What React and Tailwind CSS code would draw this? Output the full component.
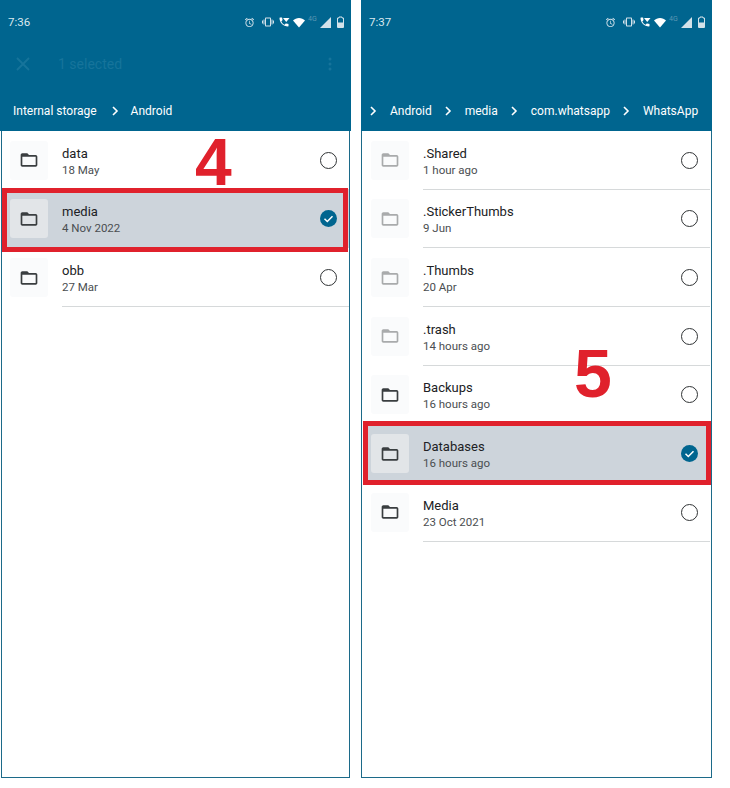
import { Fragment } from 'react'

const FOLDER = 'M20 6h-8l-2-2H4c-1.1 0-2 .9-2 2v12c0 1.1.9 2 2 2h16c1.1 0 2-.9 2-2V8c0-1.1-.9-2-2-2zm0 12H4V8h16v10z'

const leftRows = [
  { name: 'data', date: '18 May' },
  { name: 'media', date: '4 Nov 2022', selected: true, frame: '-top-[2px] -bottom-[3.5px] left-0 right-[1px]' },
  { name: 'obb', date: '27 Mar' },
]

const rightRows = [
  { name: '.Shared', date: '1 hour ago', faded: true },
  { name: '.StickerThumbs', date: '9 Jun', faded: true },
  { name: '.Thumbs', date: '20 Apr', faded: true },
  { name: '.trash', date: '14 hours ago', faded: true },
  { name: 'Backups', date: '16 hours ago' },
  { name: 'Databases', date: '16 hours ago', selected: true, frame: '-top-[3px] -bottom-[2px] left-0 -right-[1px]' },
  { name: 'Media', date: '23 Oct 2021' },
]

function Chevron() {
  return (
    <svg width="7" height="10" viewBox="0 0 7 10" className="shrink-0">
      <path d="M1 1l4 4-4 4" fill="none" stroke="white" strokeWidth="1.6" />
    </svg>
  )
}

function StatusIcons() {
  return (
    <div className="flex items-center text-[#d3e2ea]">
      <svg width="11" height="11" viewBox="0 0 24 24" fill="currentColor">
        <path d="M22 5.72l-4.6-3.86-1.29 1.53 4.6 3.86L22 5.72zM7.88 3.39L6.6 1.86 2 5.71l1.29 1.53 4.59-3.85zM12.5 8H11v6l4.75 2.85.75-1.23-4-2.37V8zM12 4c-4.97 0-9 4.03-9 9s4.02 9 9 9c4.97 0 9-4.03 9-9s-4.03-9-9-9zm0 16c-3.87 0-7-3.13-7-7s3.13-7 7-7 7 3.13 7 7-3.13 7-7 7z" />
      </svg>
      <svg width="12" height="12" viewBox="0 0 24 24" fill="currentColor" className="ml-[7px]">
        <path d="M0 15h2V9H0v6zm3 2h2V7H3v10zm19-8v6h2V9h-2zm-3 8h2V7h-2v10zM16.5 3h-9C6.67 3 6 3.67 6 4.5v15c0 .83.67 1.5 1.5 1.5h9c.83 0 1.5-.67 1.5-1.5v-15c0-.83-.67-1.5-1.5-1.5zM16 19H8V5h8v14z" />
      </svg>
      <svg width="12" height="12" viewBox="0 0 24 24" fill="white" className="ml-[4px]">
        <path d="M6.62 10.79c1.44 2.83 3.76 5.14 6.59 6.59l2.2-2.2c.27-.27.67-.36 1.02-.24 1.12.37 2.33.57 3.57.57.55 0 1 .45 1 1V20c0 .55-.45 1-1 1-9.39 0-17-7.61-17-17 0-.55.45-1 1-1h3.5c.55 0 1 .45 1 1 0 1.25.2 2.45.57 3.57.11.35.03.74-.25 1.02l-2.2 2.2z" />
        <path d="M10 4h13l-6.5 8z" />
      </svg>
      <svg width="12" height="11" viewBox="0 0 24 22" fill="white" className="ml-[3px]">
        <path d="M12 21L0 7c3.2-3 7.4-5 12-5s8.800 2 12 5z" />
      </svg>
      <span className="ml-[3px] -mt-[5px] w-[10px] text-[7px] leading-none text-[#5c97b3]">4G</span>
      <svg width="11" height="11" viewBox="0 0 22 22" fill="currentColor" className="ml-[2px] mt-[1px]">
        <path d="M0 22h22V0z" />
      </svg>
      <svg width="7" height="12" viewBox="0 0 14 24" className="ml-[6px]">
        <path d="M4 2h6v2h3v19H1V4h3z" fill="none" stroke="#d3e2ea" strokeWidth="2" />
        <path d="M2 13h10v9H2z" fill="#d3e2ea" />
      </svg>
    </div>
  )
}

function Header({ time, crumbs, children }) {
  return (
    <header className="h-[131px] shrink-0 flex flex-col bg-[#00658f] overflow-hidden">
      <div className="h-[44px] flex items-center justify-between pl-[8px] pr-[7px] text-[11.5px] text-[#dbe8ee]">
        <span className="pt-[2px]">{time}</span>
        <StatusIcons />
      </div>
      <div className="h-[40px] flex items-center">{children}</div>
      <div className="h-[47px] pt-[7px] flex items-center whitespace-nowrap text-[12px] text-white">{crumbs}</div>
    </header>
  )
}

function Row({ row }) {
  const folderColor = row.faded ? 'text-[#a9abac]' : 'text-[#3a3e40]'
  return (
    <div className={`relative h-[58.67px] flex items-center ${row.selected ? 'bg-[#cdd4db]' : ''}`}>
      <div className={`ml-[8px] w-[38px] h-[39px] shrink-0 rounded-[3px] flex items-center justify-center ${row.selected ? 'bg-[#e2e5e8]' : 'bg-[#fafbfc]'}`}>
        <svg width="20" height="20" viewBox="0 0 24 24" fill="currentColor" className={folderColor}>
          <path d={FOLDER} />
        </svg>
      </div>
      <div className="ml-[14px] pt-[2px] flex-1 min-w-0 self-stretch flex flex-col justify-center">
        <div className="text-[13px] leading-[17px] text-[#202124]">{row.name}</div>
        <div className="text-[11.5px] leading-[16px] text-[#4a4e51]">{row.date}</div>
      </div>
      <div className="mr-[12px] shrink-0">
        {row.selected ? (
          <svg width="17" height="17" viewBox="0 0 17 17">
            <circle cx="8.500" cy="8.500" r="8.500" fill="#00658f" />
            <path d="M4.500 8.800l2.800 2.700 5.200-5.300" fill="none" stroke="white" strokeWidth="1.500" />
          </svg>
        ) : (
          <div className="w-[17px] h-[17px] rounded-full border-[1.5px] border-[#303335]" />
        )}
      </div>
      {!row.selected && <div className="absolute left-[60px] right-0 bottom-0 h-px bg-[#d6d9da]" />}
      {row.selected && <div className={`absolute ${row.frame} border-[5px] border-[#e0212c]`} />}
    </div>
  )
}

function Phone({ time, crumbs, rows, bar, body, number, numberClass }) {
  return (
    <section className="relative w-[351px] h-[778px] flex flex-col font-['Roboto',sans-serif]">
      <Header time={time} crumbs={crumbs}>{bar}</Header>
      <div className={`flex-1 border-x border-b border-[#1c6a89] bg-white ${body}`}>
        {rows.map((row) => (
          <Row key={row.name} row={row} />
        ))}
      </div>
      <span className={`absolute ${numberClass} font-['Liberation_Sans',sans-serif] font-bold leading-none text-[#e0212c]`}>
        {number}
      </span>
    </section>
  )
}

export default function App() {
  const leftCrumbs = (
    <div className="flex items-center pl-[13px]">
      <span>Internal storage</span>
      <span className="ml-[15px]"><Chevron /></span>
      <span className="ml-[12px]">Android</span>
    </div>
  )

  const path = ['Android', 'media', 'com.whatsapp', 'WhatsApp']
  const rightCrumbs = (
    <div className="flex items-center pl-[9px]">
      {path.map((name) => (
        <Fragment key={name}>
          <Chevron />
          <span className="ml-[13px] mr-[13px]">{name}</span>
        </Fragment>
      ))}
    </div>
  )

  const selectionBar = (
    <div className="w-full flex items-center text-[#16749b]">
      <svg width="14" height="14" viewBox="0 0 14 14" className="ml-[16px]">
        <path d="M1 1l12 12M13 1L1 13" stroke="currentColor" strokeWidth="1.800" />
      </svg>
      <span className="ml-[28px] text-[14px]">1 selected</span>
      <svg width="4" height="14" viewBox="0 0 4 14" className="ml-auto mr-[19px]">
        <circle cx="2" cy="2" r="1.500" fill="currentColor" />
        <circle cx="2" cy="7" r="1.500" fill="currentColor" />
        <circle cx="2" cy="12" r="1.500" fill="currentColor" />
      </svg>
    </div>
  )

  return (
    <div className="w-[730px] h-[788px] flex gap-[10px] bg-white overflow-hidden">
      <Phone time="7:36" crumbs={leftCrumbs} rows={leftRows} bar={selectionBar} body="mx-[1px]" number="4" numberClass="left-[195px] top-[129px] text-[66px]" />
      <Phone time="7:37" crumbs={rightCrumbs} rows={rightRows} body="px-[1px]" number="5" numberClass="left-[213px] top-[339px] text-[68px]" />
    </div>
  )
}
